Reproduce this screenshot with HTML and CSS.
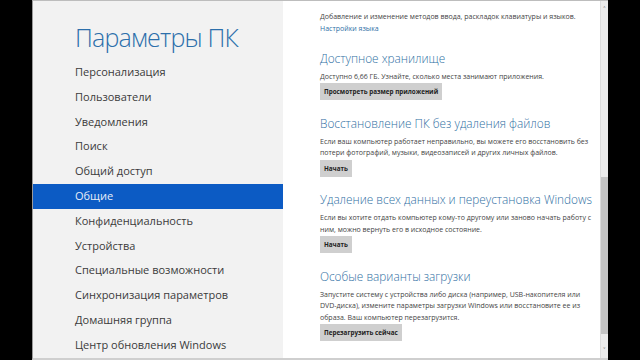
FILE: index.html
```html
<!DOCTYPE html>
<html lang="ru">
<head>
  <meta charset="UTF-8">
  <meta name="viewport" content="width=device-width, initial-scale=1.0">
  <title>Параметры ПК</title>
  <link rel="stylesheet" href="styles.css">
</head>
<body>
  <div class="screen">
    <div class="window">
      <nav class="sidebar">
        <h1>Параметры ПК</h1>
        <ul class="menu">
          <li>Персонализация</li>
          <li>Пользователи</li>
          <li>Уведомления</li>
          <li>Поиск</li>
          <li>Общий доступ</li>
          <li class="active">Общие</li>
          <li>Конфиденциальность</li>
          <li>Устройства</li>
          <li>Специальные возможности</li>
          <li>Синхронизация параметров</li>
          <li>Домашняя группа</li>
          <li>Центр обновления Windows</li>
        </ul>
      </nav>

      <main class="content">
        <section class="group first">
          <p>Добавление и изменение методов ввода, раскладок клавиатуры и языков.</p>
          <a class="link" href="#">Настройки языка</a>
        </section>

        <section class="group">
          <h2>Доступное хранилище</h2>
          <p>Доступно 6,66 ГБ. Узнайте, сколько места занимают приложения.</p>
          <button>Просмотреть размер приложений</button>
        </section>

        <section class="group">
          <h2>Восстановление ПК без удаления файлов</h2>
          <p>Если ваш компьютер работает неправильно, вы можете его восстановить без<br>потери фотографий, музыки, видеозаписей и других личных файлов.</p>
          <button>Начать</button>
        </section>

        <section class="group">
          <h2>Удаление всех данных и переустановка Windows</h2>
          <p>Если вы хотите отдать компьютер кому-то другому или заново начать работу с<br>ним, можно вернуть его в исходное состояние.</p>
          <button>Начать</button>
        </section>

        <section class="group">
          <h2>Особые варианты загрузки</h2>
          <p>Запустите систему с устройства либо диска (например, USB-накопителя или<br>DVD-диска), измените параметры загрузки Windows или восстановите ее из<br>образа. Ваш компьютер перезагрузится.</p>
          <button>Перезагрузить сейчас</button>
        </section>
      </main>

      <div class="scrollbar">
        <span class="arrow up"></span>
        <div class="track">
          <div class="thumb"></div>
        </div>
        <span class="arrow down"></span>
      </div>
    </div>
  </div>
</body>
</html>
```

FILE: styles.css
```css
* {
  margin: 0;
  padding: 0;
  box-sizing: border-box;
}

body {
  background: #000;
  font-family: 'Open Sans', 'Noto Sans', sans-serif;
  width: 640px;
  height: 360px;
  overflow: hidden;
}

.screen {
  display: flex;
  justify-content: flex-start;
  height: 360px;
  padding-left: 32px;
}

.window {
  display: flex;
  width: 576px;
  height: 360px;
  border-top: 1px solid #bdbdbd;
  border-bottom: 2px solid #cfcfcf;
  border-left: 1px solid #9a9a9a;
  overflow: hidden;
}

/* left menu */
.sidebar {
  width: 250px;
  background: #f2f2f2;
  flex-shrink: 0;
  padding-top: 19px;
}

.sidebar h1 {
  font-weight: 300;
  font-size: 25px;
  color: #2c6fab;
  padding-left: 42px;
  line-height: 34px;
  letter-spacing: -0.8px;
}

.menu {
  list-style: none;
  margin-top: 6px;
}

.menu li {
  height: 24.8px;
  line-height: 24px;
  padding-left: 42px;
  font-size: 11px;
  color: #3b3b3b;
}

.menu li.active {
  background: #0c5bc4;
  color: #e8eef8;
}

/* right pane */
.content {
  flex: 1;
  background: #fff;
  padding: 10px 0 0 37px;
  font-size: 7px;
  color: #444;
}

.group {
  margin-bottom: 12.5px;
}

.group.first {
  margin-bottom: 14px;
}

.group p {
  line-height: 11.5px;
}

.link {
  display: block;
  color: #2f70a6;
  text-decoration: none;
  line-height: 11px;
}

h2 {
  font-weight: 300;
  font-size: 11.8px;
  color: #2f6fa3;
  line-height: 20px;
  margin-bottom: 3px;
}

button {
  font-family: inherit;
  font-size: 6.3px;
  font-weight: 700;
  color: #222;
  background: #cfcfcf;
  border: none;
  padding: 0 4px;
  height: 17px;
  margin-top: 1px;
}

/* scroll bar */
.scrollbar {
  width: 8px;
  background: #ebebeb;
  display: flex;
  flex-direction: column;
  align-items: center;
  border-left: 1px solid #dcdcdc;
}

.arrow {
  height: 16px;
  font-size: 8px;
  color: #666;
  display: flex;
  align-items: center;
  justify-content: center;
}

.arrow.up::before {
  content: "˄";
}

.arrow.down::before {
  content: "˅";
}

.track {
  flex: 1;
  width: 100%;
  padding-top: 160px;
  padding-bottom: 8px;
}

.thumb {
  height: 100%;
  background: #c4c4c4;
}
```
